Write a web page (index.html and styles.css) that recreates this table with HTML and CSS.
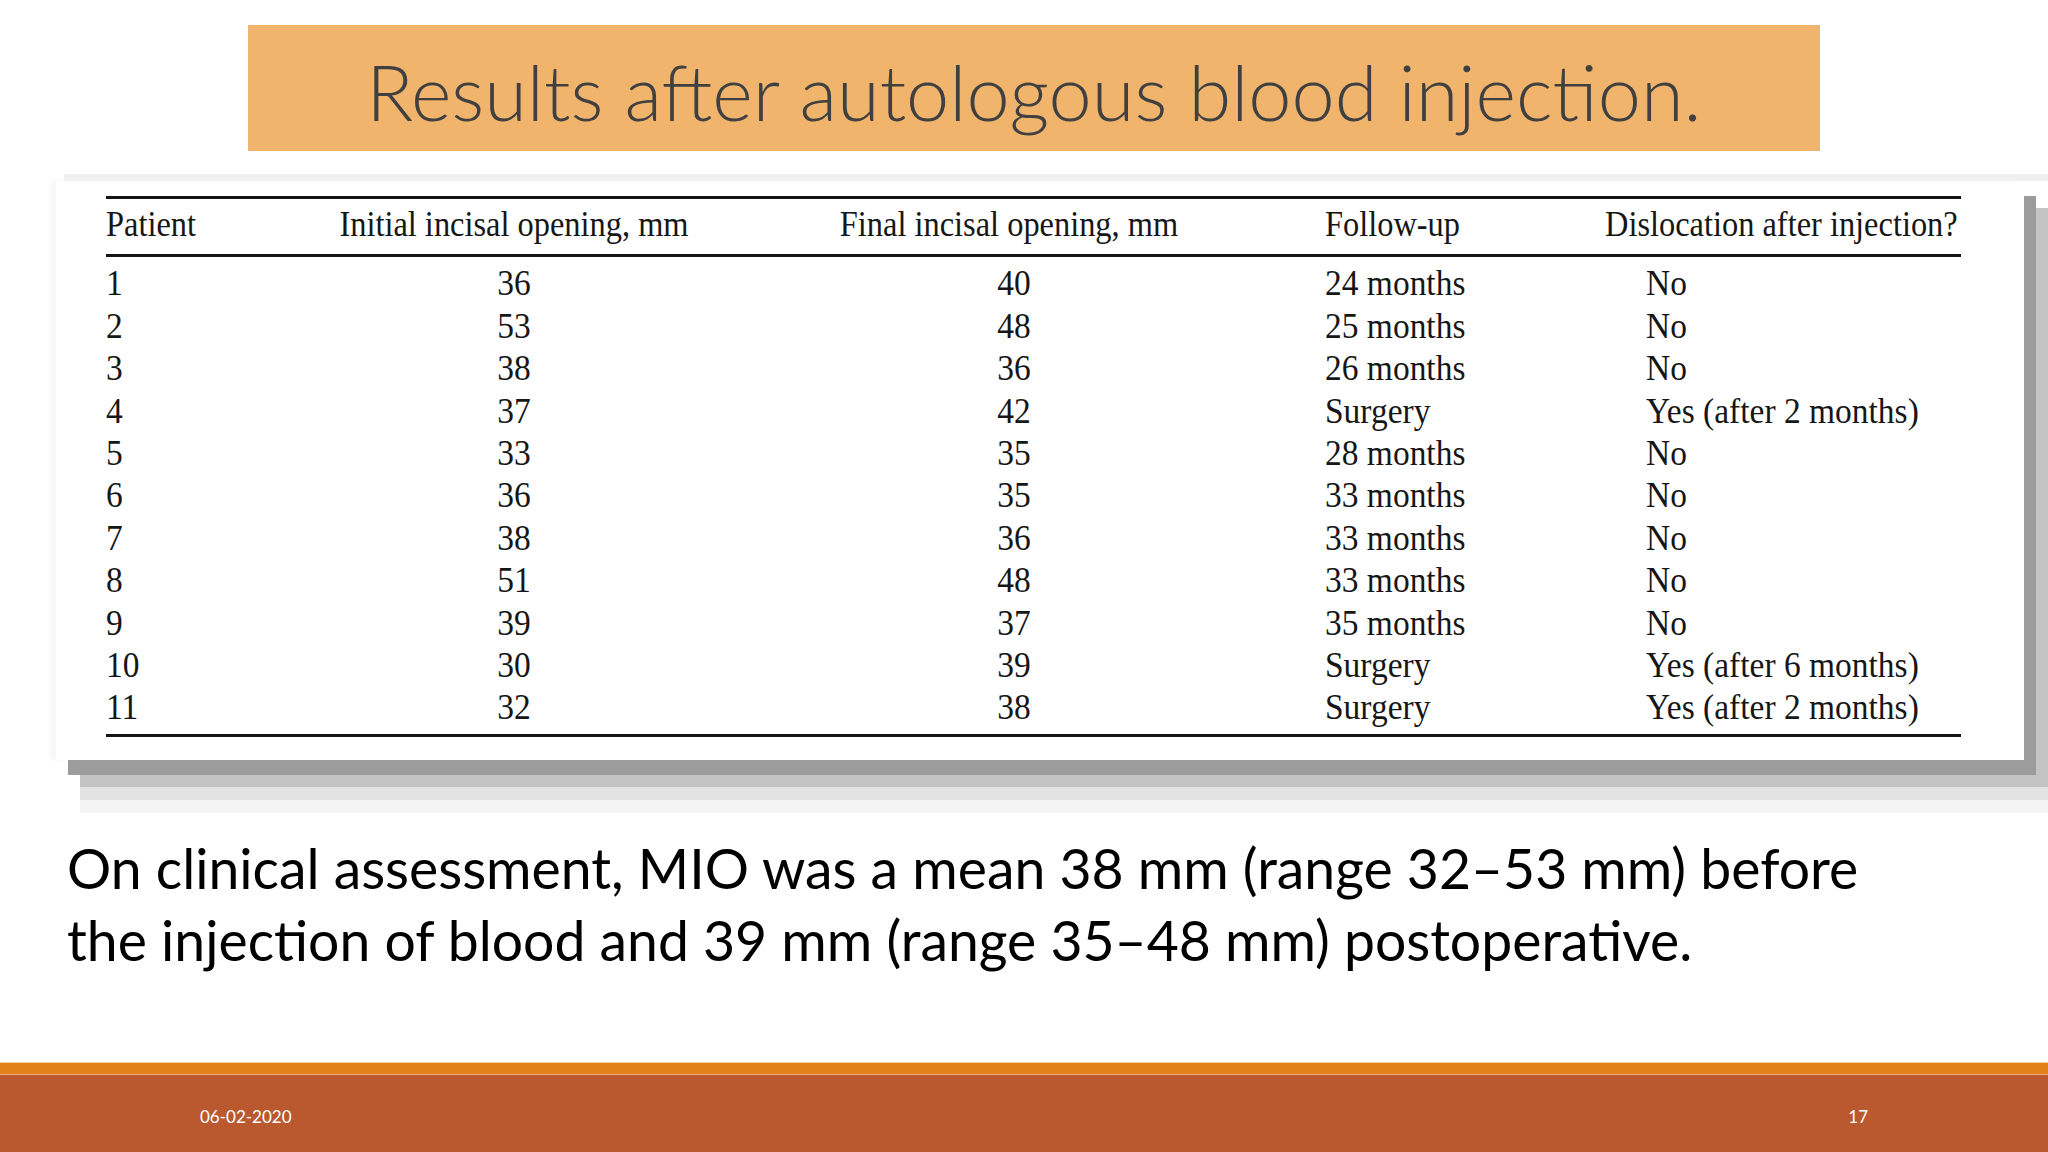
FILE: index.html
```html
<!DOCTYPE html>
<html lang="en">
<head>
<meta charset="utf-8">
<title>Results after autologous blood injection.</title>
<link rel="stylesheet" href="styles.css">
</head>
<body>
<div class="slide">
  <header class="title-box">
    <h1 class="title">Results after autologous blood injection.</h1>
  </header>

  <figure class="table-shot">
    <div class="table-panel">
      <table class="results">
        <colgroup>
          <col class="c1"><col class="c2"><col class="c3"><col class="c4"><col class="c5">
        </colgroup>
        <thead>
          <tr>
            <th class="l"><span class="t">Patient</span></th>
            <th class="c"><span class="t">Initial incisal opening, mm</span></th>
            <th class="c c3p"><span class="t">Final incisal opening, mm</span></th>
            <th class="l"><span class="t">Follow-up</span></th>
            <th class="l"><span class="t">Dislocation after injection?</span></th>
          </tr>
        </thead>
        <tbody>
          <tr><td class="l"><span class="t">1</span></td><td class="c"><span class="t">36</span></td><td class="c c3v"><span class="t">40</span></td><td class="l"><span class="t">24 months</span></td><td class="l c5v"><span class="t">No</span></td></tr>
          <tr><td class="l"><span class="t">2</span></td><td class="c"><span class="t">53</span></td><td class="c c3v"><span class="t">48</span></td><td class="l"><span class="t">25 months</span></td><td class="l c5v"><span class="t">No</span></td></tr>
          <tr><td class="l"><span class="t">3</span></td><td class="c"><span class="t">38</span></td><td class="c c3v"><span class="t">36</span></td><td class="l"><span class="t">26 months</span></td><td class="l c5v"><span class="t">No</span></td></tr>
          <tr><td class="l"><span class="t">4</span></td><td class="c"><span class="t">37</span></td><td class="c c3v"><span class="t">42</span></td><td class="l"><span class="t">Surgery</span></td><td class="l c5v"><span class="t">Yes (after 2 months)</span></td></tr>
          <tr><td class="l"><span class="t">5</span></td><td class="c"><span class="t">33</span></td><td class="c c3v"><span class="t">35</span></td><td class="l"><span class="t">28 months</span></td><td class="l c5v"><span class="t">No</span></td></tr>
          <tr><td class="l"><span class="t">6</span></td><td class="c"><span class="t">36</span></td><td class="c c3v"><span class="t">35</span></td><td class="l"><span class="t">33 months</span></td><td class="l c5v"><span class="t">No</span></td></tr>
          <tr><td class="l"><span class="t">7</span></td><td class="c"><span class="t">38</span></td><td class="c c3v"><span class="t">36</span></td><td class="l"><span class="t">33 months</span></td><td class="l c5v"><span class="t">No</span></td></tr>
          <tr><td class="l"><span class="t">8</span></td><td class="c"><span class="t">51</span></td><td class="c c3v"><span class="t">48</span></td><td class="l"><span class="t">33 months</span></td><td class="l c5v"><span class="t">No</span></td></tr>
          <tr><td class="l"><span class="t">9</span></td><td class="c"><span class="t">39</span></td><td class="c c3v"><span class="t">37</span></td><td class="l"><span class="t">35 months</span></td><td class="l c5v"><span class="t">No</span></td></tr>
          <tr><td class="l"><span class="t">10</span></td><td class="c"><span class="t">30</span></td><td class="c c3v"><span class="t">39</span></td><td class="l"><span class="t">Surgery</span></td><td class="l c5v"><span class="t">Yes (after 6 months)</span></td></tr>
          <tr class="last"><td class="l"><span class="t">11</span></td><td class="c"><span class="t">32</span></td><td class="c c3v"><span class="t">38</span></td><td class="l"><span class="t">Surgery</span></td><td class="l c5v"><span class="t">Yes (after 2 months)</span></td></tr>
        </tbody>
      </table>
    </div>
  </figure>

  <p class="body-text">On clinical assessment, MIO was a mean 38 mm (range 32–53 mm) before<br>the injection of blood and 39 mm (range 35–48 mm) postoperative.</p>

  <footer class="footer">
    <div class="footer-stripe"></div>
    <div class="footer-bar">
      <span class="footer-date">06-02-2020</span>
      <span class="footer-num">17</span>
    </div>
  </footer>
</div>
</body>
</html>
```

FILE: styles.css
```css
html, body {
  margin: 0;
  padding: 0;
  background: #ffffff;
}

.slide {
  width: 2048px;
  height: 1152px;
  display: flex;
  flex-direction: column;
  overflow: hidden;
  background: #ffffff;
}

/* ---------- Title ---------- */
.title-box {
  box-sizing: border-box;
  margin: 25px 0 0 248px;
  width: 1572px;
  height: 126px;
  padding-top: 22px;
  background: #f0b46c;
}

.title {
  margin: 0;
  font-family: Lato, "Open Sans", sans-serif;
  font-weight: 300;
  font-size: 77.5px;
  line-height: 90px;
  color: #404040;
  text-align: center;
  white-space: nowrap;
}

/* ---------- Table screenshot ---------- */
.table-shot {
  margin: 23px 0 0 0;
  padding: 7px 0 0 56px;
  background: linear-gradient(#efefef, #efefef) no-repeat 64px 0 / 100% 7px;
}

.table-panel {
  box-sizing: border-box;
  width: 1968px;
  padding: 15px 0 23px 50px;
  background: #ffffff;
  box-shadow:
    12px 15px 0 0 #9c9c9c,
    24px 27px 0 0 #c4c4c4,
    24px 40px 0 0 #e3e3e3,
    24px 53px 0 0 #f4f4f4,
    -6px 0 5px 0 #f7f7f7;
}

.results {
  width: 1855px;
  table-layout: fixed;
  border-collapse: collapse;
  border-top: 3px solid #151515;
  border-bottom: 3px solid #151515;
  font-family: "Liberation Serif", "Times New Roman", serif;
  font-size: 36px;
  color: #161616;
}

.results col.c1 { width: 250px; }
.results col.c2 { width: 316px; }
.results col.c3 { width: 653px; }
.results col.c4 { width: 280px; }
.results col.c5 { width: 356px; }

.results th,
.results td {
  padding: 0;
  font-weight: normal;
  line-height: 42.4px;
  white-space: nowrap;
}

.results th {
  padding: 4px 0 9px 0;
  border-bottom: 3px solid #151515;
}

.results tbody tr:first-child td { padding-top: 5px; }
.results tbody tr.last td { padding-bottom: 5px; }

.results .l { text-align: left; }
.results .c { text-align: center; }
.results .c3p { padding-left: 20px; }
.results .c3v { padding-left: 30px; }
.results .c5v { padding-left: 41px; }

.results .t {
  display: inline-block;
  transform: scaleX(0.9);
}

.results td .t { transform: scaleX(0.93); }

.results .l .t { transform-origin: left center; }
.results .c .t {
  transform-origin: center center;
  margin: 0 -120px;
}

/* ---------- Body text ---------- */
.body-text {
  margin: 72px 0 0 67px;
  font-family: Lato, "Open Sans", sans-serif;
  font-size: 55.3px;
  line-height: 72px;
  color: #000000;
  white-space: nowrap;
}

/* ---------- Footer ---------- */
.footer {
  margin-top: auto;
}

.footer-stripe {
  height: 11px;
  background: #e2801a;
  border-top: 1px solid #f6d2a6;
  border-bottom: 1px solid #eea872;
}

.footer-bar {
  box-sizing: border-box;
  height: 77px;
  display: flex;
  justify-content: space-between;
  align-items: flex-start;
  padding: 31px 180px 0 200px;
  background: #ba592f;
  font-family: Lato, "Open Sans", sans-serif;
  font-size: 17px;
  color: #ffffff;
}
```
